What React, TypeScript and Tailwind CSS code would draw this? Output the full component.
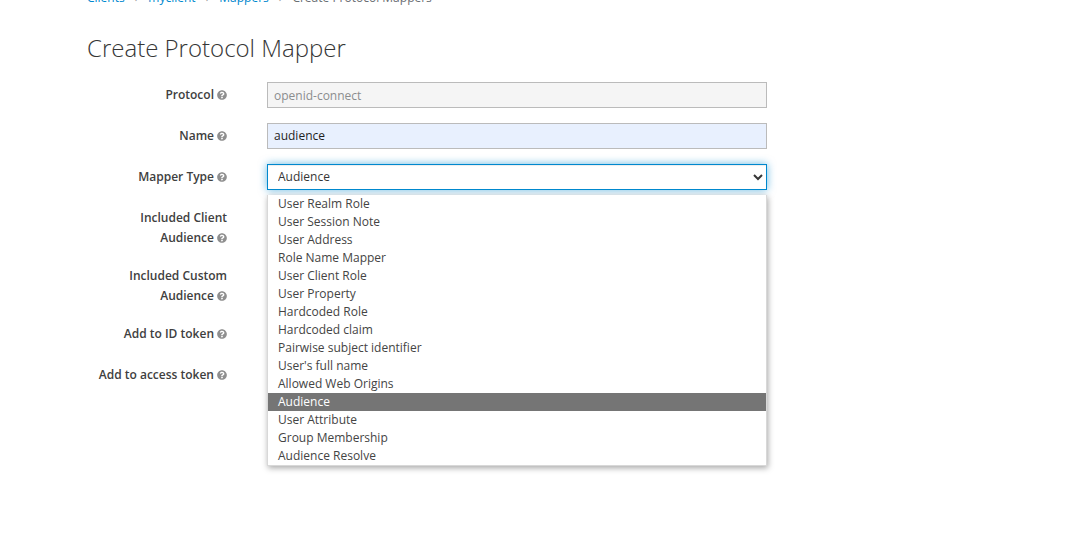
import { Fragment } from "react";
import { FaQuestionCircle } from "react-icons/fa";

const crumbs = ["Clients", "myclient", "Mappers"];

const mapperTypes = [
    "User Realm Role",
    "User Session Note",
    "User Address",
    "Role Name Mapper",
    "User Client Role",
    "User Property",
    "Hardcoded Role",
    "Hardcoded claim",
    "Pairwise subject identifier",
    "User's full name",
    "Allowed Web Origins",
    "Audience",
    "User Attribute",
    "Group Membership",
    "Audience Resolve",
];

const Help = () => <FaQuestionCircle className="inline-block ml-[3px] mb-[1px] text-[#8f8f8f]" size={10} />;

const Row = ({ label, help = true, children, className = "" }: { label: React.ReactNode; help?: boolean; children?: React.ReactNode; className?: string }) => (
    <div className={`flex ${className}`}>
        <label className="w-[140px] shrink-0 text-right font-semibold text-[#404040] leading-[20px] pt-[3px]">
            {label}
            {help && <Help />}
        </label>
        <div className="ml-[40px] w-[500px]">{children}</div>
    </div>
);

export default function App() {
    return (
        <div className="h-[537px] overflow-hidden bg-white font-['Open_Sans',sans-serif] text-[12px] text-[#363636]">
            <div className="pl-[87px] -mt-[10px] h-[16px] flex items-center leading-[16px]">
                {crumbs.map((c) => (
                    <Fragment key={c}>
                        <a className="text-[#0088ce]">{c}</a>
                        <span className="mx-[10px] text-[#9c9c9c]">›</span>
                    </Fragment>
                ))}
                <span className="text-[#6a6e73]">Create Protocol Mappers</span>
            </div>

            <h1 className="pl-[87px] mt-[25px] text-[24px] leading-[33px] font-light text-[#363636]">Create Protocol Mapper</h1>

            <div className="relative pl-[87px] mt-[18px] flex flex-col">
                <Row label="Protocol">
                    <input
                        readOnly
                        value="openid-connect"
                        className="block w-full h-[26px] px-[6px] border border-[#bbbbbb] bg-[#f5f5f5] text-[#8b8d8f] outline-none"
                    />
                </Row>
                <Row label="Name" className="mt-[15px]">
                    <input
                        readOnly
                        value="audience"
                        className="block w-full h-[26px] px-[6px] pb-[1px] border border-[#bbbbbb] bg-[#e8f0fe] text-[#1f1f1f] outline-none"
                    />
                </Row>
                <Row label="Mapper Type" className="mt-[15px]">
                    <select
                        defaultValue="Audience"
                        className="block w-full h-[26px] px-[6px] pb-[1px] border border-[#0088ce] bg-white text-[#363636] outline-none shadow-[inset_0_1px_1px_rgba(3,3,3,0.075),0_0_8px_rgba(0,136,206,0.6)]"
                    >
                        {mapperTypes.map((t) => (
                            <option key={t}>{t}</option>
                        ))}
                    </select>
                </Row>
                <Row label={<>Included Client<br />Audience</>} className="mt-[15px]" />
                <Row label={<>Included Custom<br />Audience</>} className="mt-[15px]" />
                <Row label="Add to ID token" className="mt-[15px]" />
                <Row label="Add to access token" className="mt-[18px]" />

                <ul className="absolute left-[267px] top-[113px] w-[500px] bg-white border-x border-b border-[#d8d8d8] shadow-[1px_2px_6px_rgba(0,0,0,0.35)] text-[#444444]">
                    {mapperTypes.map((t) => (
                        <li
                            key={t}
                            className={`h-[18px] leading-[18px] pl-[10px] ${t === "Audience" ? "bg-[#757575] text-white" : ""}`}
                        >
                            {t}
                        </li>
                    ))}
                </ul>
            </div>
        </div>
    );
}
